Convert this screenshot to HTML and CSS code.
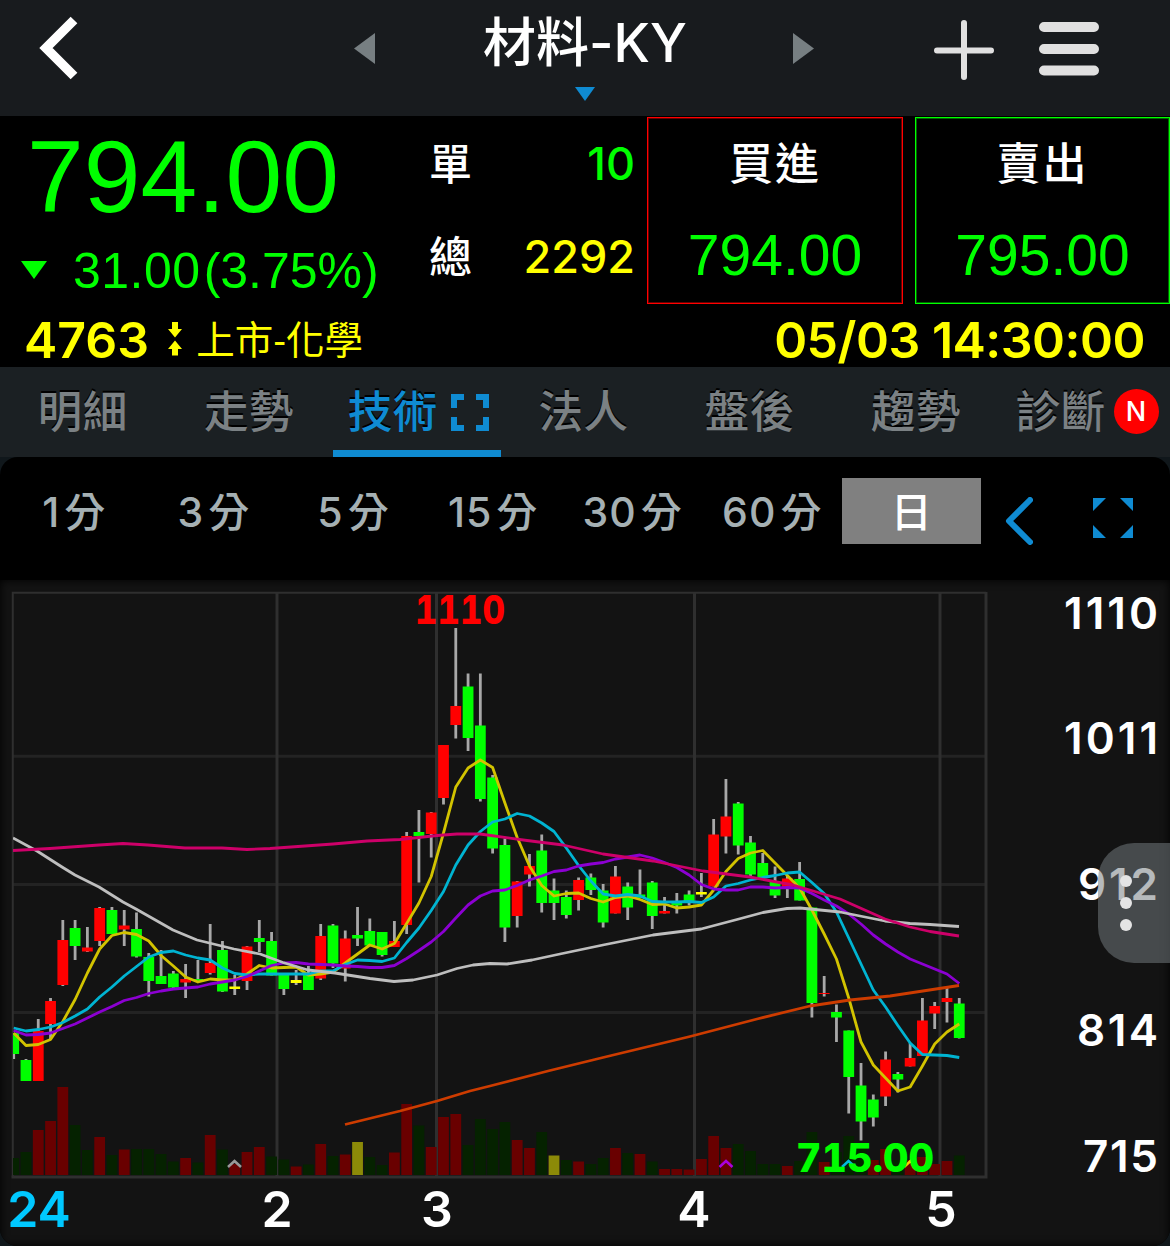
FILE: index.html
```
<!DOCTYPE html>
<html lang="zh-Hant">

<head>
    <meta charset="UTF-8">
    <meta name="viewport" content="width=device-width, initial-scale=1.0">
    <title>材料-KY</title>
    <link rel="stylesheet" href="styles.css">
    <script type="text/javascript" src="chart.js"></script>
</head>

<body>
    <!--標題列-->
    <div class="header">
        <svg class="icon-back" width="40" height="64" viewBox="0 0 40 64"><path d="M35 4 L7 32 L35 60" /></svg>
        <svg class="icon-prev" width="21" height="31" viewBox="0 0 21 31"><path d="M21 0 V31 L0 15.5 Z" /></svg>
        <h1 class="title">材料-KY</h1>
        <svg class="icon-next" width="21" height="31" viewBox="0 0 21 31"><path d="M0 0 V31 L21 15.5 Z" /></svg>
        <svg class="icon-add" width="60" height="60" viewBox="0 0 60 60"><path d="M3 30.5 H57 M30 3 V57" /></svg>
        <svg class="icon-menu" width="60" height="56" viewBox="0 0 60 56"><path d="M5 6 H55 M5 28 H55 M5 49.500 H55" /></svg>
        <svg class="icon-drop" width="20" height="14" viewBox="0 0 20 14"><path d="M0 0 H20 L10 14 Z" /></svg>
    </div>

    <!--報價-->
    <div class="quote">
        <div class="last">
            <div class="price">794.00</div>
            <div class="change">
                <svg width="26" height="18" viewBox="0 0 26 18"><path d="M0 0 H26 L13 18 Z" /></svg>
                <span class="diff">31.00</span><span class="percent">(3.75%)</span>
            </div>
        </div>
        <div class="volume">
            <div class="volume-row"><span class="label">單</span><span class="down">10</span></div>
            <div class="volume-row"><span class="label">總</span><span class="total">2292</span></div>
        </div>
        <div class="order buy">
            <div class="order-name">買進</div>
            <div class="order-price">794.00</div>
        </div>
        <div class="order sell">
            <div class="order-name">賣出</div>
            <div class="order-price">795.00</div>
        </div>
    </div>
    <div class="info">
        <span class="code">4763</span>
        <svg width="14" height="34" viewBox="0 0 14 34"><path d="M4 0 H10 V7 H14 L7 15.500 L0 7 H4 Z M4 33.500 H10 V27 H14 L7 18.500 L0 27 H4 Z" /></svg>
        <span class="market">上市-化學</span>
        <span class="time">05/03 14:30:00</span>
    </div>

    <!--頁籤-->
    <ul class="tabs">
        <li>明細</li>
        <li>走勢</li>
        <li class="active">技術<svg width="38" height="37" viewBox="0 0 38 37"><path d="M3 14 V3 H13 M25 3 H35 V14 M35 23 V34 H25 M13 34 H3 V23" /></svg></li>
        <li>法人</li>
        <li>盤後</li>
        <li>趨勢</li>
        <li class="diagnose">診斷<span class="badge">N</span></li>
    </ul>

    <div class="panel">
        <!--週期-->
        <div class="periods">
            <a><b>1</b>分</a>
            <a><b>3</b>分</a>
            <a><b>5</b>分</a>
            <a><b>15</b>分</a>
            <a><b>30</b>分</a>
            <a><b>60</b>分</a>
            <a class="selected">日</a>
            <svg class="icon-left" width="28" height="48" viewBox="0 0 28 48"><path d="M25 3 L4 24 L25 45" /></svg>
            <svg class="icon-full" width="40" height="40" viewBox="0 0 40 40"><path d="M0 0 H13 L0 13 Z M40 0 V13 L27 0 Z M40 40 H27 L40 27 Z M0 40 V27 L13 40 Z" /></svg>
        </div>
        <!--K線圖-->
        <svg id="chart" class="chart" width="1170" height="666" viewBox="0 580 1170 666">
            <defs>
                <clipPath id="plot"><rect x="13" y="592" width="975" height="586" /></clipPath>
            </defs>
            <g class="grid-h">
                <path d="M13 756.300 H986 M13 884.500 H986 M13 1012.500 H986" />
            </g>
            <g class="grid-v">
                <path d="M277 593 V1177 M436.500 593 V1177 M694.500 593 V1177 M940 593 V1177" />
                <path d="M11.500 1177 H987.500 M986 592 V1178" />
                <path class="thin" d="M12.800 1177 V592.800 H986" />
            </g>
            <g id="bars" clip-path="url(#plot)"></g>
            <g id="candles" clip-path="url(#plot)"></g>
            <g id="lines" clip-path="url(#plot)"></g>
            <g class="marks">
                <path stroke="#999" d="M228 1167 L234.500 1161 L241 1167" />
                <path stroke="#a0d" d="M719.500 1167 L726 1161 L732.500 1167" />
                <path stroke="#0bd" d="M842 1167 L848.500 1161 L855 1167" />
                <path stroke="#fc0" d="M904 1167 L910.500 1161 L917 1167" />
            </g>
            <g class="peak">
                <text class="high" x="415" y="624" textLength="90" lengthAdjust="spacingAndGlyphs">1110</text>
                <text class="low" x="796" y="1172" textLength="138" lengthAdjust="spacingAndGlyphs">715.00</text>
            </g>
            <g class="axis-price">
                <text x="1158" y="629" textLength="94">1110</text>
                <text x="1158" y="754" textLength="94">1011</text>
                <text x="1158" y="900" textLength="80">912</text>
                <text x="1158" y="1046" textLength="81">814</text>
                <text x="1158" y="1172" textLength="75">715</text>
            </g>
            <g class="axis-month">
                <text class="year" x="39" y="1227">24</text>
                <text x="277" y="1227">2</text>
                <text x="437" y="1227">3</text>
                <text x="694" y="1227">4</text>
                <text x="941" y="1227">5</text>
            </g>
        </svg>
        <!--浮動選單-->
        <div class="float-menu"><i></i><i></i><i></i></div>
    </div>
</body>

</html>
```
FILE: styles.css
```
* {
    margin: 0;
    padding: 0;
    box-sizing: border-box;
}

body {
    width: 1170px;
    height: 1246px;
    overflow: hidden;
    background-color: #10171b;
    color: #fff;
    font-family: Inter, "Noto Sans CJK TC", sans-serif;
    white-space: nowrap;
}

svg {
    display: block;
    flex: none;
}

/*標題列*/

.header {
    position: relative;
    display: flex;
    height: 116px;
    background-color: #181b1e;
}

.icon-back {
    margin: 16px 0 0 39px;
    fill: none;
    stroke: #fff;
    stroke-width: 9.500;
}

.icon-prev {
    margin: 33px 0 0 275px;
    fill: #777f82;
}

.title {
    width: 418px;
    padding-left: 2px;
    line-height: 86px;
    font-size: 53px;
    font-weight: 500;
    text-align: center;
}

.icon-next {
    margin-top: 33px;
    fill: #777f82;
}

.icon-add {
    margin: 20px 0 0 120px;
    fill: none;
    stroke: #e0e0e0;
    stroke-width: 6;
    stroke-linecap: round;
}

.icon-menu {
    margin: 21px 0 0 45px;
    fill: none;
    stroke: #e0e0e0;
    stroke-width: 10;
    stroke-linecap: round;
}

.icon-drop {
    position: absolute;
    left: 575px;
    top: 87px;
    fill: #0f8bd2;
}

/*報價*/

.quote {
    display: flex;
    height: 188px;
    background-color: #000;
}

.last {
    width: 429px;
    color: #0f0;
    font-family: "Liberation Sans", sans-serif;
}

.price {
    padding-left: 27px;
    font-size: 102px;
    line-height: 122px;
}

.change {
    display: flex;
    font-size: 50px;
    line-height: 66px;
}

.change svg {
    margin: 23px 26px 0 21px;
    fill: #0f0;
}

.diff {
    letter-spacing: 0.5px;
}

.percent {
    margin-left: 3px;
}

.volume {
    width: 206px;
}

.volume-row {
    display: flex;
    justify-content: space-between;
    height: 93px;
    line-height: 95px;
    font-size: 45px;
    font-weight: 500;
}

.label {
    line-height: 97px;
    font-size: 43px;
}

.down {
    color: #0f0;
}

.total {
    color: #ff0;
}

.order {
    width: 256px;
    height: 187px;
    margin: 1px 0 0 12px;
    border: 1px solid #f00;
    box-shadow: inset 0 0 0 1px #600;
    text-align: center;
}

.sell {
    width: 255px;
    margin-left: 12px;
    border-color: #0f0;
    box-shadow: inset 0 0 0 1px #060;
}

.order-name {
    height: 88px;
    font-size: 44px;
    font-weight: 500;
    line-height: 93px;
    letter-spacing: 2px;
}

.order-price {
    color: #0f0;
    font-family: "Liberation Sans", sans-serif;
    font-size: 57px;
    line-height: 99px;
}

.info {
    display: flex;
    height: 63px;
    padding: 10px 25px 0 24px;
    background-color: #000;
    color: #ff0;
    font-size: 50px;
    font-weight: 600;
    line-height: 53px;
}

.info svg {
    margin: 8px 14px 0 19px;
    fill: #ff0;
}

.market {
    font-family: "Liberation Sans", "Noto Sans CJK TC", sans-serif;
    font-size: 38.500px;
    font-weight: 400;
}

.time {
    margin-left: auto;
    letter-spacing: -0.5px;
}

/*頁籤*/

.tabs {
    display: flex;
    height: 90px;
    list-style: none;
    background-color: #1b2023;
}

.tabs li {
    display: flex;
    flex: 1;
    justify-content: center;
    padding-right: 1px;
    color: #7b8184;
    font-size: 44.500px;
    font-weight: 500;
    line-height: 90px;
    letter-spacing: 0.5px;
    text-shadow: 0 -2px 0 #000;
}

.tabs .active {
    padding: 0 0 0 3px;
    border-bottom: 7px solid #0f8bd2;
    color: #0f8bd2;
}

.tabs .diagnose {
    padding: 0 0 0 5px;
}

.active svg {
    margin: 27px 0 0 13px;
    fill: none;
    stroke: #0f8bd2;
    stroke-width: 6;
}

.badge {
    width: 45px;
    height: 45px;
    margin: 22px 0 0 8px;
    border-radius: 50%;
    background-color: #f00;
    color: #fff;
    font-size: 27px;
    line-height: 46px;
    text-align: center;
    text-shadow: none;
}

.panel {
    position: relative;
    height: 789px;
    overflow: hidden;
    border-radius: 18px;
    background-color: #000;
}

/*週期*/

.periods {
    display: flex;
    height: 123px;
    padding: 21px 0 0 4px;
}

.periods a {
    width: 139.600px;
    height: 66px;
    color: #a5b0b3;
    font-size: 41px;
    font-weight: 500;
    line-height: 68px;
    text-align: center;
}

.periods b {
    margin-right: 4px;
    font-weight: 500;
    letter-spacing: 1px;
}

.periods .selected {
    background-color: #808080;
    color: #fff;
}

.icon-left {
    margin: 19px 0 0 24px;
    fill: none;
    stroke: #0f8bd2;
    stroke-width: 6;
    stroke-linecap: round;
    stroke-linejoin: round;
}

.icon-full {
    margin: 20px 0 0 60px;
    fill: #0f8bd2;
}

/*K線圖*/

.chart {
    background-color: #131313;
    box-shadow: inset 0 0 10px #000;
}

.grid-h path {
    stroke: #232323;
    stroke-width: 3;
}

.grid-v path {
    fill: none;
    stroke: #2f2f2f;
    stroke-width: 3;
}

.grid-v .thin {
    stroke-width: 2;
}

#lines polyline {
    fill: none;
    stroke-width: 2.800;
    stroke-linejoin: round;
}

.marks path {
    fill: none;
    stroke-width: 2.500;
}

.peak text {
    font-size: 39px;
    font-weight: 800;
    font-variant-numeric: tabular-nums;
}

.high {
    fill: #f00;
}

.low {
    fill: #0f0;
}

.axis-price text {
    fill: #fff;
    font-size: 44px;
    font-weight: 600;
    text-anchor: end;
}

.axis-month text {
    fill: #fff;
    font-size: 50px;
    font-weight: 600;
    text-anchor: middle;
}

.axis-month .year {
    fill: #00c8ff;
}

.float-menu {
    position: absolute;
    right: 0;
    top: 386px;
    display: flex;
    flex-direction: column;
    gap: 10px;
    width: 72px;
    height: 120px;
    padding: 32px 0 0 22px;
    border-radius: 36px 0 0 36px;
    background-color: rgba(117, 124, 127, 0.525);
}

.float-menu i {
    width: 12px;
    height: 12px;
    border-radius: 50%;
    background-color: #e4e4e4;
}
```
FILE: chart.js
```
//每根K棒: [顏色, 實體上緣, 實體下緣, 最高, 最低, 量柱顏色, 量柱上緣]
var data = [
    ["g", 1033, 1054, 1033, 1059, "g", 1158],
    ["g", 1060, 1081, 1059, 1081, "g", 1152],
    ["r", 1031, 1081, 1019, 1081, "r", 1130],
    ["r", 1001, 1024, 998, 1039, "r", 1121],
    ["r", 940, 985, 920, 986, "r", 1087],
    ["g", 928, 946, 920, 960, "g", 1125],
    ["r", 947.5, 951.5, 927, 952, "g", 1150],
    ["r", 908, 941, 907, 946, "r", 1137],
    ["g", 910, 934, 907, 934, "g", 1155],
    ["r", 925.5, 929.5, 910, 946, "r", 1149.5],
    ["g", 929, 956.5, 912.5, 957.5, "g", 1149],
    ["g", 957, 981, 953, 996.5, "g", 1149],
    ["g", 976, 984, 950, 984, "g", 1154],
    ["g", 973.5, 987.5, 971, 988, "g", 1161.5],
    ["r", 979, 982.5, 964, 998, "r", 1158],
    ["g", 979, 981, 960, 981, "g", 1162.5],
    ["r", 963, 973, 924, 974.5, "r", 1135],
    ["g", 950, 991.5, 941, 992, "g", 1149.5],
    ["y", 986.5, 989, 975, 995, "r", 1164],
    ["r", 946.5, 981, 946, 990, "r", 1152],
    ["g", 938, 942, 920, 952, "r", 1147],
    ["g", 941, 975.5, 932, 975.5, "g", 1156.5],
    ["g", 973.5, 989, 973, 995, "g", 1159.5],
    ["y", 980, 983, 970, 985, "r", 1166.5],
    ["g", 974.5, 990, 966, 990, "g", 1164.5],
    ["r", 936, 978.5, 924, 980, "r", 1144],
    ["g", 925.5, 963.5, 924, 968, "g", 1156],
    ["r", 938.5, 968.5, 930.5, 981.5, "r", 1154.5],
    ["g", 935, 938.5, 907, 946, "y", 1142],
    ["g", 931, 945.5, 918.5, 946, "g", 1157],
    ["g", 932, 955, 932, 956.5, "g", 1165],
    ["r", 941, 947, 921, 947, "r", 1152.5],
    ["r", 836, 925, 832, 934, "r", 1104],
    ["g", 832, 836, 810, 882.5, "g", 1125.5],
    ["r", 812.5, 834, 812, 857.5, "r", 1147],
    ["r", 745, 798, 745, 804.5, "r", 1117],
    ["r", 706, 725, 628, 738.5, "r", 1114],
    ["g", 686.5, 738, 673.5, 751, "g", 1145],
    ["g", 725.5, 799, 673.5, 801.5, "g", 1119],
    ["g", 777.5, 848.5, 775, 853.5, "g", 1129],
    ["g", 845, 927.5, 838.5, 942, "g", 1122],
    ["r", 881.5, 916, 881, 927.5, "r", 1140],
    ["r", 866, 874.5, 854, 886.5, "r", 1148],
    ["g", 850.5, 903, 834.5, 912.5, "g", 1132],
    ["g", 890.5, 903, 878.5, 920, "y", 1155.5],
    ["g", 897, 915, 890.5, 918.5, "g", 1160],
    ["r", 880, 900, 877.5, 910.5, "r", 1161.5],
    ["g", 877.5, 890, 873.5, 895, "g", 1164],
    ["g", 890.5, 922.5, 884, 927.5, "g", 1158],
    ["r", 876.5, 913.5, 866, 913.5, "r", 1148],
    ["g", 886.5, 907.5, 882.5, 920, "g", 1153],
    ["g", 894.5, 898, 869.5, 898, "r", 1154],
    ["g", 882.5, 916, 881, 929, "g", 1161.5],
    ["r", 911, 913.5, 897, 913.5, "r", 1169],
    ["g", 901.5, 905.5, 893, 913.5, "r", 1169],
    ["g", 894.5, 901.5, 890.5, 905.5, "r", 1169.5],
    ["y", 892, 894.5, 873, 897, "r", 1159],
    ["r", 834.5, 886.5, 819, 886.5, "r", 1136],
    ["r", 816.5, 836.5, 779, 853.5, "r", 1148],
    ["g", 803.5, 845.5, 802, 854.5, "g", 1144],
    ["g", 842.5, 874.5, 836, 878, "g", 1151],
    ["g", 863, 878, 853, 878, "g", 1164],
    ["g", 882, 895.5, 866.5, 898, "g", 1164],
    ["r", 878.5, 887, 875.5, 898, "r", 1166],
    ["g", 879, 900.5, 862, 900.5, "g", 1161],
    ["g", 907.5, 1003, 907.5, 1017.5, "g", 1132],
    ["r", 993, 994, 976, 996.5, "r", 1162],
    ["g", 1012, 1017.5, 1004.5, 1042, "g", 1152],
    ["g", 1030.5, 1077, 1030.5, 1113.5, "g", 1136],
    ["g", 1085.5, 1121.5, 1063, 1140.5, "g", 1145],
    ["g", 1099.5, 1117.5, 1094.5, 1126.5, "r", 1160],
    ["r", 1059.5, 1096.5, 1051.5, 1106, "r", 1149],
    ["g", 1074, 1079.5, 1072, 1092.5, "g", 1160],
    ["r", 1058, 1066.5, 1043, 1066.5, "r", 1160],
    ["r", 1020.5, 1056, 998, 1056, "r", 1157],
    ["r", 1006, 1013.5, 1002, 1029, "r", 1164],
    ["r", 998, 1002, 988, 1022.5, "r", 1161],
    ["g", 1003.5, 1038, 998, 1038.5, "g", 1155.5]
];

//短天期均線，每根K棒一個點
var ma5 = [1033, 1045.5, 1044.5, 1039.5, 1021.5, 999.5, 973, 949, 935.5, 932.5, 934.5, 941, 955.5, 966, 977, 982, 979, 980, 980, 974,
    965.5, 968, 967.5, 967, 975, 974, 972, 963, 954, 945, 949, 943.5, 923.5, 903, 876.5, 833, 787, 768, 760, 767.5,
    803, 837.5, 866, 885.5, 896, 893.5, 893, 898.5, 902, 897.5, 896, 899.5, 904.5, 904, 908, 907, 905, 890, 871.5, 858.5,
    853, 850.5, 863, 875.5, 888, 910, 934, 959, 998, 1042, 1065, 1078, 1091, 1087, 1066, 1044, 1032, 1024];
var ma10 = [1028, 1031, 1029.5, 1027, 1022.5, 1016, 1009, 997, 987, 976, 966.5, 957, 952.5, 951, 955, 958, 960, 968, 973.5, 975,
    974, 974, 974, 974, 974, 971, 971, 964.5, 960, 960.5, 961.5, 958, 942.5, 928, 910.5, 891.5, 865, 845, 831.5, 822,
    819, 813.5, 816, 823, 831.5, 848, 865.5, 881, 894, 896, 894.5, 896, 901.5, 902, 902, 901.5, 902.5, 897, 886, 883.5,
    880, 877.5, 875.5, 873, 872, 882.5, 893.5, 912, 938, 964, 990, 1007, 1025.5, 1043, 1054.5, 1055, 1055.5, 1057.5];
var ma20 = [1030.5, 1035, 1034.5, 1033, 1028.5, 1024, 1018, 1012, 1006.5, 1000.5, 997.5, 993.5, 991, 989, 988, 987, 984, 982, 980, 976.5,
    971, 965.5, 963, 962.5, 964, 964.5, 965, 966, 966.5, 967.5, 967.5, 965.5, 958.5, 950.5, 942, 931.5, 918, 905, 896, 891,
    890, 885.5, 880, 876, 871.5, 870, 866, 864, 862.5, 859, 857, 855, 858, 862.5, 867.5, 875, 884.5, 889, 890, 890,
    887, 887, 888, 887.5, 888, 893.5, 900, 906, 914, 924, 935, 944, 952, 959, 964, 969, 974, 983.5];

//長天期均線，直接給座標
var ma60 = "13,838 37,851 62,867 75,875 99,887 123,902 136,909 173,930 197,940 234,949 260,954 283,962.5 308,970 335,973 370,978.5 394,981.5 413,980 437,975 457,968.5 473,965 490,963.5 507,964 532,960 560,954 603,945 653,935 701,929 737,919.5 763,912.5 787,908.5 800,908 840,912 885,921 910,923.5 930,924.5 959,926.5";
var ma120 = "13,850.5 50,848.5 99,845 123,843.5 148,845 185,848 222,848 247,849.5 270,848.5 333,844 367,841 400,839.5 437,835.5 457,834 480,834 527,840.5 563,845 603,854 653,861 703,871 750,877 793,885 840,899 885,919 910,927 930,931.5 959,936";
var ma240 = "345,1124.5 400,1111 437,1101 470,1091 490,1086 550,1070.5 603,1057.5 690,1036.5 757,1019 810,1006 850,1000 890,996 959,985.5";

var NS = "http://www.w3.org/2000/svg";

//K棒中心的x座標
function getX(i) {
    return 13.7 + 12.28 * i;
}

function addRect(parent, x, y, w, h, color) {
    var rect = document.createElementNS(NS, "rect");
    rect.setAttribute("x", x);
    rect.setAttribute("y", y);
    rect.setAttribute("width", w);
    rect.setAttribute("height", h);
    rect.setAttribute("fill", color);
    parent.appendChild(rect);
}

function addLine(parent, points, color) {
    var line = document.createElementNS(NS, "polyline");
    line.setAttribute("points", points);
    line.setAttribute("stroke", color);
    parent.appendChild(line);
}

function toPoints(arr) {
    return arr.map(function(y, i) {
        return getX(i) + "," + y;
    }).join(" ");
}

window.onload = function() {
    var bars = document.getElementById("bars");
    var candles = document.getElementById("candles");
    var lines = document.getElementById("lines");
    var colors = { r: "#ff0000", g: "#00ff00", y: "#ffff00" };
    var barColors = { r: "#690000", g: "#052200", y: "#8c8a08" };

    for (var i = 0; i < data.length; i++) {
        var d = data[i];
        var x = getX(i);
        //成交量
        addRect(bars, x - 5.4, d[6], 10.8, 1175 - d[6], barColors[d[5]]);
        //影線和實體
        addRect(candles, x - 1.4, d[3], 2.8, d[4] - d[3], "#a8a8a8");
        addRect(candles, x - 5.4, d[1], 10.8, d[2] - d[1], colors[d[0]]);
    }

    addLine(lines, toPoints(ma5), "#d2c300");
    addLine(lines, toPoints(ma10), "#00b4d2");
    addLine(lines, toPoints(ma20), "#8c00d2");
    addLine(lines, ma60, "#bebebe");
    addLine(lines, ma120, "#cd0069");
    addLine(lines, ma240, "#cd3c00");
};
```
